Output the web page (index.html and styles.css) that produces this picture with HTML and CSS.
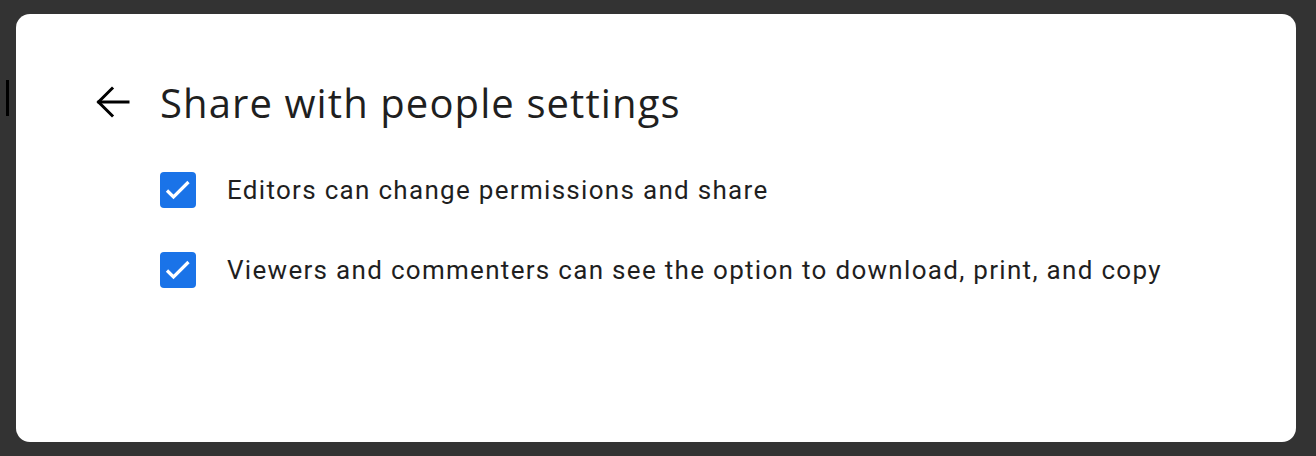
FILE: index.html
```html
<!DOCTYPE html>
<html lang="en">
<head>
<meta charset="utf-8">
<title>Share with people settings</title>
<link rel="stylesheet" href="styles.css">
</head>
<body>
<span class="caret"></span>
<div class="card">
  <div class="header">
    <button class="back" aria-label="Back">
      <svg width="34" height="34" viewBox="0 0 34 34" fill="none" stroke="#000" stroke-width="3" stroke-linecap="square">
        <path d="M3 17H32"/>
        <path d="M16 3.5L2.5 17L16 30.5"/>
      </svg>
    </button>
    <h1 class="title">Share with people settings</h1>
  </div>
  <div class="options">
    <label class="option">
      <span class="checkbox">
        <svg width="36" height="36" viewBox="0 0 36 36" fill="none" stroke="#fff" stroke-width="3.2">
          <path d="M7 18.5L13.5 25L28.5 10"/>
        </svg>
      </span>
      <span class="label">Editors can change permissions and share</span>
    </label>
    <label class="option">
      <span class="checkbox">
        <svg width="36" height="36" viewBox="0 0 36 36" fill="none" stroke="#fff" stroke-width="3.2">
          <path d="M7 18.5L13.5 25L28.5 10"/>
        </svg>
      </span>
      <span class="label">Viewers and commenters can see the option to download, print, and copy</span>
    </label>
  </div>
</div>
</body>
</html>
```

FILE: styles.css
```css
html, body {
  margin: 0;
  padding: 0;
}
body {
  background: #333333;
  width: 1316px;
  height: 456px;
  padding: 14px 20px 14px 16px;
  box-sizing: border-box;
  position: relative;
  font-family: Roboto, "Liberation Sans", sans-serif;
}
.caret {
  position: absolute;
  left: 6px;
  top: 80px;
  width: 3px;
  height: 36px;
  background: #000;
}
.card {
  background: #fff;
  border-radius: 14px;
  width: 1280px;
  height: 428px;
  box-sizing: border-box;
  padding: 66px 0 0 80px;
}
.header {
  display: flex;
  align-items: center;
  height: 44px;
}
.back {
  border: 0;
  background: none;
  padding: 0;
  margin: 0 30px 0 0;
  width: 34px;
  height: 34px;
  display: flex;
}
.title {
  margin: 0;
  font-family: "Open Sans", Roboto, sans-serif;
  font-weight: 400;
  font-size: 40px;
  color: #1f1f1f;
  letter-spacing: 1.1px;
}
.options {
  display: flex;
  flex-direction: column;
  gap: 44px;
  margin: 48px 0 0 64px;
}
.option {
  display: flex;
  align-items: center;
  gap: 31px;
  height: 36px;
}
.checkbox {
  width: 36px;
  height: 36px;
  border-radius: 4px;
  background: #1a73e8;
  display: flex;
  flex: none;
}
.label {
  font-size: 26px;
  color: #1f1f1f;
  letter-spacing: 1.3px;
}
```
